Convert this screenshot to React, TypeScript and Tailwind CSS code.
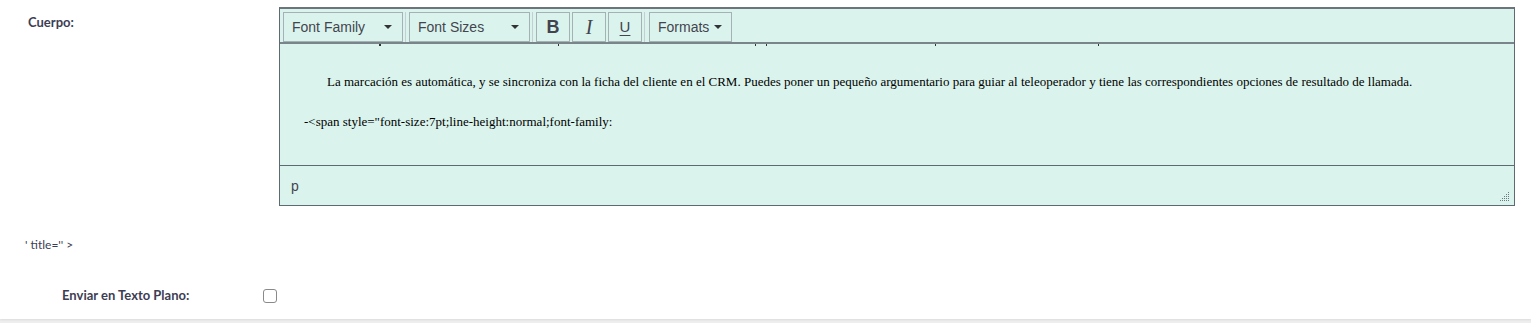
import React from 'react';

// Small caret used in the dropdown buttons
function Caret() {
    return <span className="inline-block w-0 h-0 border-l-[4px] border-r-[4px] border-t-[4px] border-l-transparent border-r-transparent border-t-[#333]" />;
}

function ToolButton({ children, className = '' }: { children: React.ReactNode; className?: string }) {
    return (
        <div className={`h-[30px] border border-[#a4b1b5] bg-[#daf4ed] flex items-center text-[14px] text-[#44444f] ${className}`}>
            {children}
        </div>
    );
}

function Sep({ mr }: { mr: string }) {
    return <div className={`ml-[2px] w-px h-[30px] bg-[#c3cfd1] ${mr}`} />;
}

function ResizeHandle() {
    const dots: [number, number][] = [];
    for (let r = 0; r < 5; r++) {
        for (let c = 4 - r; c < 5; c++) dots.push([c * 2, r * 2]);
    }
    return (
        <svg width="10" height="10" className="absolute right-[4px] bottom-[3px]">
            {dots.map(([x, y], i) => (
                <rect key={i} x={x} y={y} width="1" height="1" fill="#6b7a80" />
            ))}
        </svg>
    );
}

// bits of the line scrolled out of view above the content
const clipped = [99, 100, 278, 475, 486, 655, 818];

export default function App() {
    const sans = "font-['Liberation_Sans',Arial,sans-serif]";
    return (
        <div className="w-[1531px] h-[323px] bg-[#eeeeee] overflow-hidden">
            <div className="bg-white h-[319px] pt-[7px] shadow-[0_1px_2px_rgba(0,0,0,0.08)] font-['Lato',sans-serif] text-[#3d3d53]">
                <div className="flex">
                    <div className="w-[279px] pl-[28px] pt-[6px] text-[13px] font-bold">Cuerpo:</div>
                    <div className="w-[1236px] border-x border-b border-[#5d6a71] border-t-2 border-t-[#6b757b] bg-[#daf4ed] relative">
                        {/* toolbar */}
                        <div className={`flex h-[35px] pl-[3px] pt-[3px] border-b-2 border-[#79858b] ${sans}`}>
                            <ToolButton className="w-[120px] pl-[8px] pr-[10px] justify-between">
                                <span>Font Family</span>
                                <Caret />
                            </ToolButton>
                            <Sep mr="mr-[3px]" />
                            <ToolButton className="w-[121px] pl-[8px] pr-[10px] justify-between">
                                <span>Font Sizes</span>
                                <Caret />
                            </ToolButton>
                            <Sep mr="mr-[3px]" />
                            <ToolButton className="w-[34px] justify-center text-[18px] font-bold text-[#4d4b5f]">B</ToolButton>
                            <ToolButton className="ml-[2px] w-[34px] justify-center text-[20px] italic font-['Liberation_Serif',serif] text-[#4d4b5f]">I</ToolButton>
                            <ToolButton className="ml-[2px] w-[34px] justify-center text-[15px] underline underline-offset-[3px] text-[#4d4b5f]">U</ToolButton>
                            <Sep mr="mr-[4px]" />
                            <ToolButton className="w-[83px] pl-[8px] gap-[5px]">
                                <span>Formats</span>
                                <Caret />
                            </ToolButton>
                        </div>
                        {/* content */}
                        <div className="relative h-[122px] overflow-hidden border-b border-[#5d6a71] font-['Liberation_Serif',serif] text-[13px] text-black px-[24px] pt-[30px]">
                            {clipped.map((x) => (
                                <div key={x} className="absolute top-0 w-px h-[2px] bg-[#333]" style={{ left: x }} />
                            ))}
                            <p className="leading-[15px] indent-[23px]">
                                La marcación es automática, y se sincroniza con la ficha del cliente en el CRM. Puedes poner un pequeño argumentario para guiar al teleoperador y tiene las correspondientes opciones de resultado de llamada.
                            </p>
                            <p className="mt-[25px] leading-[15px]">-&lt;span style="font-size:7pt;line-height:normal;font-family:</p>
                        </div>
                        {/* status bar */}
                        <div className={`h-[39px] pl-[11px] pt-[2px] flex items-center text-[14px] text-[#44444f] ${sans}`}>p</div>
                        <ResizeHandle />
                    </div>
                </div>
                <div className="pl-[25px] mt-[31px] text-[12px] leading-[16px]">' title='' &gt;</div>
                <div className="flex items-center mt-[33px]">
                    <div className="w-[263px] pl-[62px] text-[13px] font-bold">Enviar en Texto Plano:</div>
                    <div className="w-[14px] h-[14px] border border-[#8a8a8a] rounded-[3px] bg-white" />
                </div>
            </div>
        </div>
    );
}
